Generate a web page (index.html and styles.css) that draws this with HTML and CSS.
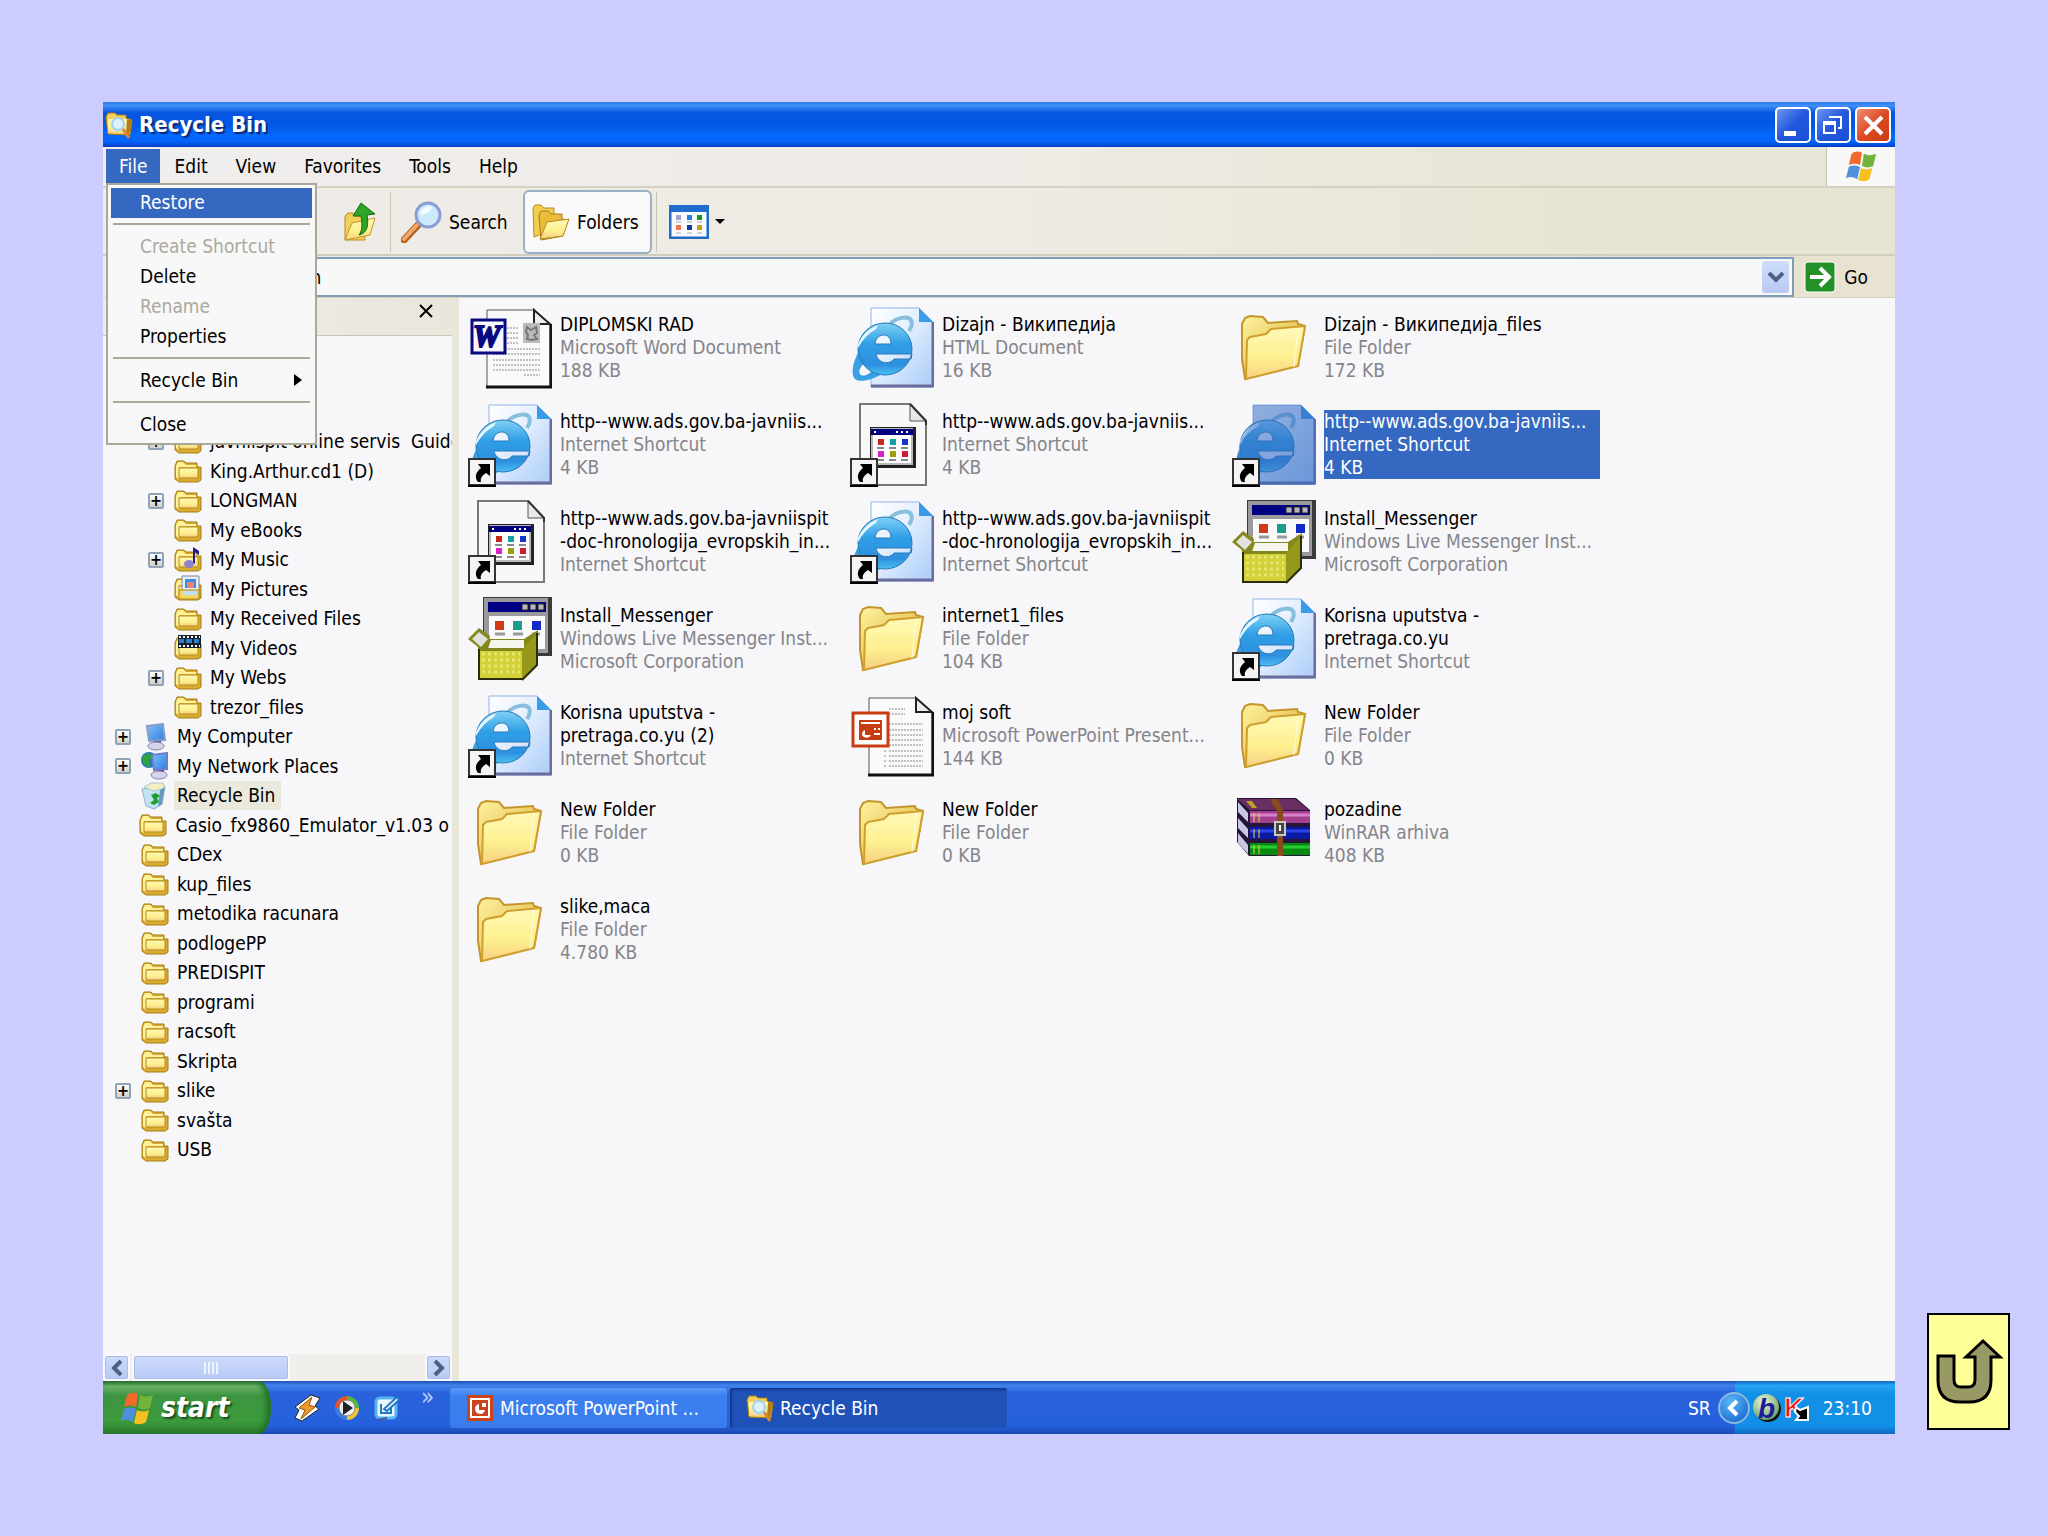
FILE: index.html
```html
<!DOCTYPE html>
<html lang="en">

<head>
    <meta charset="UTF-8">
    <meta name="viewport" content="width=device-width, initial-scale=1.0">
    <title>Recycle Bin</title>
    <link rel="stylesheet" href="styles.css">
</head>

<body>
    <!-- icon library -->
    <svg class="defs" width="0" height="0" aria-hidden="true">
        <defs>
            <linearGradient id="gFolder" x1="0" y1="0" x2="0" y2="1">
                <stop offset="0" stop-color="#fff9b8" />
                <stop offset=".6" stop-color="#fdf08e" />
                <stop offset="1" stop-color="#f7cf83" />
            </linearGradient>
            <linearGradient id="gFolderBack" x1="0" y1="0" x2="1" y2="1">
                <stop offset="0" stop-color="#fdf3a0" />
                <stop offset="1" stop-color="#dca72c" />
            </linearGradient>
            <linearGradient id="gPage" x1="0" y1="0" x2="1" y2="1">
                <stop offset="0" stop-color="#ffffff" />
                <stop offset=".4" stop-color="#e6f0ff" />
                <stop offset="1" stop-color="#a9ccf8" />
            </linearGradient>
            <linearGradient id="gIe" x1="0" y1="0" x2="0" y2="1">
                <stop offset="0" stop-color="#7fd0f4" />
                <stop offset=".4" stop-color="#2f9fe6" />
                <stop offset=".8" stop-color="#2d8fe0" />
                <stop offset="1" stop-color="#4cc0f4" />
            </linearGradient>
            <linearGradient id="gBlue" x1="0" y1="0" x2="1" y2="1">
                <stop offset="0" stop-color="#7fc4fb" />
                <stop offset="1" stop-color="#2f7be0" />
            </linearGradient>
            <radialGradient id="gBall" cx=".4" cy=".3" r=".8">
                <stop offset="0" stop-color="#e8f8d8" />
                <stop offset="1" stop-color="#5f9a58" />
            </radialGradient>
            <radialGradient id="gChev" cx=".4" cy=".3" r=".8">
                <stop offset="0" stop-color="#5cb8f8" />
                <stop offset="1" stop-color="#1464cc" />
            </radialGradient>

            <symbol id="folder" viewBox="0 0 84 84">
                <path d="M10 18L13 12L18 10L31 11L36 17L65 15L66 18L73 20L66 60L13 73L10 53Z" fill="url(#gFolderBack)" stroke="#c4952a" stroke-width="2" />
                <path d="M14 73L15 34L18 31L34 28L39 23L73 20L66 60Z" fill="url(#gFolder)" stroke="#cf9f30" stroke-width="2" />
                <path d="M66 22L62 61" stroke="#fffbe0" stroke-width="1" />
            </symbol>

            <symbol id="iepage" viewBox="0 0 84 84">
                <path d="M21 2H69L83 16V81H21Z" fill="url(#gPage)" stroke="#8fb4ea" stroke-width="1" />
                <path d="M69 2V16H83Z" fill="#3a9be8" />
                <path d="M83 16V80H21" fill="none" stroke="#6a6c9c" stroke-width="3" />
                <path d="M40 18C47 11 58 10 61 14C63 18 61 22 59 25" fill="none" stroke="#88bfdc" stroke-width="4" />
                <path d="M9 45C2 57 1 69 5 73C10 77 22 74 32 68L24 63C18 70 12 71 10 68C8 65 11 60 15 56Z" fill="#3aa0e6" />
                <path d="M8 43A27 26 0 1 0 62 43A27 26 0 1 0 8 43ZM25 38C26 31 30 29 34 29C38 29 41 32 41 38ZM26 48H62L61 53H44C40 59 28 58 26 48Z" fill="url(#gIe)" fill-rule="evenodd" stroke="#2a78b4" stroke-width="1" />
                <path d="M8 38Q14 24 28 19L26 23Q14 30 8 42Z" fill="#e6f8ff" />
            </symbol>

            <symbol id="dots" viewBox="0 0 46 41">
                <path d="M0 0H46V41H0Z" fill="#222" />
                <path d="M1 1H43V38H1Z" fill="#b9b9b9" />
                <path d="M3 8H41V36H3Z" fill="#fff" />
                <path d="M1 2H43V8H1Z" fill="#000080" />
                <path d="M26 4h2v2h-2zM31 4h2v2h-2zM36 4h2v2h-2zM4 4h2v2h-2z" fill="#fff" />
                <path d="M8 12h6v6h-6z" fill="#c8281a" />
                <path d="M20 12h6v6h-6z" fill="#12a0a8" />
                <path d="M32 12h6v6h-6z" fill="#1434d0" />
                <path d="M8 24h6v6h-6z" fill="#d822c8" />
                <path d="M20 24h6v6h-6z" fill="#98a010" />
                <path d="M32 24h6v6h-6z" fill="#d01c30" />
                <path d="M7 21h7M19 21h7M31 21h7M7 33h7M19 33h7M31 33h7" stroke="#888" stroke-width="2" />
            </symbol>

            <symbol id="apppage" viewBox="0 0 84 84">
                <path d="M10 1H60L76 18V82H10Z" fill="#f8f8f8" stroke="#777" stroke-width="2" />
                <path d="M60 1V18H76Z" fill="#e8e8e8" stroke="#555" stroke-width="1" />
                <path d="M60 1L76 18V22" fill="none" stroke="#333" stroke-width="2" />
                <use href="#dots" x="20" y="24" width="46" height="41" />
            </symbol>

            <symbol id="shortcut" viewBox="0 0 84 84">
                <path d="M1 56H27V82H1Z" fill="#f4f4f4" stroke="#333" stroke-width="2" />
                <path d="M0 83H28" stroke="#000" stroke-width="2" />
                <path d="M10 61H22V73L18 70C14 73 12 75 13 79H10C6 74 8 69 13 65Z" fill="#000" />
            </symbol>

            <symbol id="word" viewBox="0 0 84 84">
                <path d="M19 4H66L82 19V81H19Z" fill="#fafafa" stroke="#555" stroke-width="1" />
                <path d="M66 4V18H82Z" fill="#ededed" stroke="#222" stroke-width="2" />
                <path d="M83 18V81H18" fill="none" stroke="#111" stroke-width="3" />
                <path d="M36 22h14M36 27h14M36 32h14M36 37h14M25 43h47M25 48h47M25 54h47M25 59h47M25 64h47M56 69h16" stroke="#888" stroke-width="1" stroke-dasharray="2 1" />
                <path d="M55 17h17v20h-17z" fill="#bbb" />
                <path d="M59 21l4 3 5-3 1 6-3 2 3 4-6 1-4-1 1-4-2-3z" fill="none" stroke="#777" stroke-width="2" />
                <path d="M4 14H37V47H4Z" fill="#f7f7ff" stroke="#0a0a80" stroke-width="3" />
                <text x="5" y="41" class="word-mark">W</text>
            </symbol>

            <symbol id="ppt" viewBox="0 0 84 84">
                <path d="M19 4H66L82 19V81H19Z" fill="#fafafa" stroke="#555" stroke-width="1" />
                <path d="M66 4V18H82Z" fill="#ededed" stroke="#222" stroke-width="2" />
                <path d="M83 18V81H18" fill="none" stroke="#111" stroke-width="3" />
                <path d="M39 15h16M39 20h16M39 30h34M39 36h34M39 41h34M39 46h34M39 51h34M39 57h34M39 62h34M39 67h34M39 72h34M34 57h2M34 62h2M34 67h2M34 72h2" stroke="#888" stroke-width="1" stroke-dasharray="2 1" />
                <path d="M3 19H38V52H3Z" fill="#fff" stroke="#c83c12" stroke-width="3" />
                <path d="M9 26H32V46H9Z" fill="#c83c12" />
                <path d="M11 29h19" stroke="#fff" stroke-width="2" />
                <path d="M15 36v5h6a5 5 0 0 1-9 0a5 5 0 0 1 3-5zM24 34h2v2h-2zM28 34h2v2h-2zM24 39h6v2h-6z" fill="#fff" />
            </symbol>

            <symbol id="install" viewBox="0 0 84 84">
                <path d="M15 0H84V59H15Z" fill="#3a3a3a" />
                <path d="M16 1H80V56H16Z" fill="#9a9a9a" />
                <path d="M20 5H78V15H20Z" fill="#000084" />
                <path d="M54 7h6v6h-6zM62 7h6v6h-6zM70 7h6v6h-6z" fill="#b8b8b8" stroke="#222" />
                <path d="M21 19H77V52H21Z" fill="#fafafa" />
                <path d="M27 24h9v9h-9z" fill="#d03818" />
                <path d="M45 24h9v9h-9z" fill="#1c9c8c" />
                <path d="M64 24h9v9h-9z" fill="#1428c8" />
                <path d="M27 37h10M45 37h10M64 37h8" stroke="#999" stroke-width="3" />
                <path d="M10 42H56L70 33V67L54 83H10Z" fill="#84881c" />
                <path d="M54 53L69 36V68L54 82Z" fill="#96981c" />
                <path d="M69 36V68L54 83" fill="none" stroke="#2c2c08" stroke-width="2" />
                <path d="M23 43H56V51H20Z" fill="#f5f5ee" />
                <path d="M12 54H54V81H12Z" fill="#d2d238" />
                <path d="M14 57H52M14 63H52M14 69H52M14 75H52" stroke="#e6e66c" stroke-width="3" stroke-dasharray="3 3" />
                <path d="M11 52V82H54" fill="none" stroke="#2c2c08" stroke-width="2" />
                <path d="M0 42L11 31L22 39L20 52L10 50Z" fill="#84881c" />
                <path d="M4 42L11 35L20 42L13 50Z" fill="#e0e0dc" />
            </symbol>

            <symbol id="rar" viewBox="0 0 84 84">
                <path d="M5 7H64L78 19V65H17L5 51Z" fill="#26143a" />
                <path d="M5 8H63L77 19H18Z" fill="#6a2f62" />
                <path d="M18 20H78V32H18Z" fill="#a0408e" />
                <path d="M18 24H78" stroke="#d880cc" stroke-width="3" />
                <path d="M18 36H78V48H18Z" fill="#0a1aa4" />
                <path d="M18 40H78" stroke="#2c44e0" stroke-width="3" />
                <path d="M18 52H78V64H18Z" fill="#078a12" />
                <path d="M18 56H78" stroke="#28cc30" stroke-width="3" />
                <path d="M6 11L16 22V31L6 21ZM6 27L16 38V47L6 37ZM6 42L16 54V63L6 52Z" fill="#c8c8e4" />
                <path d="M22 22v9M27 22v9M22 38v9M27 38v9M22 54v9M27 54v9" stroke="#e8d83c" stroke-width="1" />
                <path d="M14 10h6l5 7h-5z" fill="#b8a424" />
                <path d="M38 8H46L51 20V65H45V20Z" fill="#8a4c1c" />
                <path d="M43 31H53V44H43Z" fill="#444" stroke="#c8c8c8" stroke-width="2" />
                <path d="M48 34v6" stroke="#fff" stroke-width="2" />
            </symbol>

            <symbol id="sfolder" viewBox="0 0 28 28">
                <path d="M1 9L3 4H10L12 6H23V10H27V23L24 25H5L1 22Z" fill="#d8ac30" stroke="#a87c14" />
                <path d="M2 9L4 5H9L12 8H22V10H5V22L2 20Z" fill="#fdf29a" />
                <path d="M5 11H24V21H5Z" fill="url(#gFolder)" stroke="#b88a1c" />
            </symbol>
            <symbol id="smusic" viewBox="0 0 28 28">
                <use href="#sfolder" />
                <path d="M19 17V1L25 5V9L21 6V18Z" fill="#1c1c8c" />
                <ellipse cx="15" cy="18" rx="5" ry="4" fill="#8c84cc" />
            </symbol>
            <symbol id="spictures" viewBox="0 0 28 28">
                <use href="#sfolder" />
                <path d="M8 1H25V20H8Z" fill="#e8ecf4" stroke="#7a88a0" />
                <path d="M11 4H22V13H11Z" fill="#3c8ce0" />
                <path d="M13 7h7v6h-7z" fill="#f08070" />
                <path d="M5 15H25V24H5Z" fill="#f3d660" stroke="#b88a1c" />
                <path d="M9 16h14v4h-14z" fill="#bfe0f8" />
            </symbol>
            <symbol id="svideos" viewBox="0 0 28 28">
                <use href="#sfolder" />
                <path d="M4 1H27V14H4Z" fill="#18202c" />
                <path d="M5 3H26M5 12H26" stroke="#f4f4f4" stroke-width="2" stroke-dasharray="2 2" />
                <path d="M5 5h5v4h-5zM12 5h6v4h-6zM20 5h5v4h-5z" fill="#2f80c8" />
            </symbol>
            <symbol id="scomputer" viewBox="0 0 28 28">
                <path d="M6 3L22 1L24 17L8 18Z" fill="url(#gBlue)" stroke="#8c9cc8" stroke-width="2" />
                <path d="M13 18h7v4h-7z" fill="#4c4c90" />
                <ellipse cx="15" cy="23" rx="8" ry="4" fill="#d4d4ec" stroke="#8484ac" />
            </symbol>
            <symbol id="snetwork" viewBox="0 0 28 28">
                <circle cx="8" cy="8" r="8" fill="#2a74cc" />
                <path d="M2 4Q8 -1 12 4L8 10L10 15Q2 14 1 8Z" fill="#2ea43c" />
                <path d="M11 3L26 1L26 17L13 18Z" fill="url(#gBlue)" stroke="#6c80c8" stroke-width="2" />
                <path d="M16 18h7v4h-7z" fill="#4c4c90" />
                <ellipse cx="18" cy="23" rx="8" ry="4" fill="#d4d4ec" stroke="#8484ac" />
            </symbol>
            <symbol id="sbin" viewBox="0 0 28 28">
                <path d="M1 7L24 4L21 22L13 27L5 24Z" fill="#c4e2f4" stroke="#90b4cc" />
                <path d="M3 5L10 1L22 1L24 6L13 9Z" fill="#f2eec0" stroke="#a8c8d8" />
                <path d="M19 8L24 5L21 22L17 25Z" fill="#6c98c0" />
                <path d="M10 13l5-2 4 3-3 2 2 4-5 3-4-2 4-3z" fill="#1ea02c" />
            </symbol>
            <symbol id="searchfolder" viewBox="0 0 28 28">
                <path d="M1 6L3 2H10L12 4H21V7L27 9L25 24L3 23Z" fill="#f2cf58" stroke="#a87c14" />
                <path d="M3 8H22V22H3Z" fill="url(#gFolder)" />
                <path d="M22 8L27 9L24 24L21 22Z" fill="#b87c14" />
                <path d="M8 7H17L19 11V20H8Z" fill="#cfeafa" />
                <circle cx="13" cy="13" r="6" fill="#dcf2fc" stroke="#a8d0ea" stroke-width="2" />
                <path d="M18 18L24 27" stroke="#d88838" stroke-width="3" />
            </symbol>
            <symbol id="flag" viewBox="0 0 34 34">
                <path d="M7 4Q12 0 18 3L16 16Q10 13 4 16Z" fill="#f06a2c" />
                <path d="M20 4Q26 7 33 4L30 17Q24 20 18 17Z" fill="#72b43a" />
                <path d="M4 18Q9 15 16 18L13 31Q7 27 1 30Z" fill="#4f8fdc" />
                <path d="M17 19Q23 22 29 19L26 31Q20 35 14 32Z" fill="#f6c120" />
            </symbol>
        </defs>
    </svg>

    <div class="slide">
        <div class="screen">
            <div class="window">
                <header class="titlebar">
                    <svg class="icon-small"><use href="#searchfolder" /></svg>
                    <h1>Recycle Bin</h1>
                    <div class="controls">
                        <button class="ctl" aria-label="Minimize"><svg viewBox="0 0 32 32"><path d="M7 22h12v5H7z" fill="#fff" /></svg></button>
                        <button class="ctl" aria-label="Restore"><svg viewBox="0 0 32 32"><path d="M12 8H24V19H21" fill="none" stroke="#fff" stroke-width="2" /><path d="M7 13H18V24H7Z" fill="none" stroke="#fff" stroke-width="2" /><path d="M6 14H19" stroke="#fff" stroke-width="4" /></svg></button>
                        <button class="ctl close" aria-label="Close"><svg viewBox="0 0 32 32"><path d="M8 8L25 25M25 8L8 25" stroke="#fff" stroke-width="4" /></svg></button>
                    </div>
                </header>

                <nav class="menubar">
                    <div class="menu-wrap">
                        <button class="menu active">File</button>
                        <div class="dropdown">
                            <button class="active">Restore</button>
                            <hr>
                            <button disabled>Create Shortcut</button>
                            <button>Delete</button>
                            <button disabled>Rename</button>
                            <button>Properties</button>
                            <hr>
                            <button>Recycle Bin <span class="arrow-right"></span></button>
                            <hr>
                            <button>Close</button>
                        </div>
                    </div>
                    <button class="menu">Edit</button>
                    <button class="menu">View</button>
                    <button class="menu">Favorites</button>
                    <button class="menu">Tools</button>
                    <button class="menu">Help</button>
                    <div class="brand"><svg><use href="#flag" /></svg></div>
                </nav>

                <div class="toolbar">
                    <button class="tool up" aria-label="Up">
                        <svg width="34" height="40" viewBox="0 0 34 40">
                            <path d="M2 14L5 11H10L12 14H22V38H2Z" fill="#f2d05c" stroke="#b88a1c" />
                            <path d="M2 38L9 21L32 16L27 33Z" fill="url(#gFolder)" stroke="#c4952a" />
                            <path d="M18 1L32 12L24 13C26 24 24 31 16 33C20 28 19 20 18 14L10 14Z" fill="#2ea428" stroke="#156c14" />
                        </svg>
                    </button>
                    <span class="divider"></span>
                    <button class="tool search">
                        <svg width="42" height="42" viewBox="0 0 42 42">
                            <path d="M3 39L17 24" stroke="#b06428" stroke-width="7" stroke-linecap="round" />
                            <path d="M3 38L16 24" stroke="#f2a868" stroke-width="4" stroke-linecap="round" />
                            <circle cx="27" cy="14" r="12" fill="#cdeafc" stroke="#8c9cd4" stroke-width="3" />
                            <path d="M19 13Q21 5 30 5Q32 9 26 12T19 13" fill="#f2fbff" />
                        </svg>
                        Search
                    </button>
                    <button class="tool folders">
                        <svg width="40" height="38" viewBox="0 0 40 38">
                            <path d="M2 5L4 2H10L13 5H23V26L3 34Z" fill="#f0cc50" stroke="#b88a1c" />
                            <path d="M8 12L10 8H17L20 11H31V16L37 17L32 33L10 37Z" fill="#e9bc3c" stroke="#a87c14" />
                            <path d="M9 36L16 19L38 16L32 33Z" fill="url(#gFolder)" stroke="#b88a1c" />
                        </svg>
                        Folders
                    </button>
                    <span class="divider"></span>
                    <button class="tool views" aria-label="Views">
                        <svg width="40" height="34" viewBox="0 0 40 34">
                            <path d="M1 1H39V33H1Z" fill="#f8fbff" stroke="#1f6cc4" stroke-width="3" />
                            <path d="M0 0H40V7H0Z" fill="#1f6cd0" />
                            <path d="M7 10h5v5h-5z" fill="#a8a0d8" />
                            <path d="M18 10h5v5h-5z" fill="#2a80d8" />
                            <path d="M28 10h5v5h-5z" fill="#189818" />
                            <path d="M7 20h5v5h-5z" fill="#f07850" />
                            <path d="M18 20h5v5h-5z" fill="#143ca0" />
                            <path d="M28 20h5v5h-5z" fill="#c8a010" />
                            <path d="M7 17h5M18 17h5M28 17h5M7 28h5M18 28h5M28 28h5" stroke="#aaa" />
                        </svg>
                        <span class="arrow-down"></span>
                    </button>
                </div>

                <form class="address">
                    <div class="combo">
                        <input type="text" value="Recycle Bin" aria-label="Address">
                        <button type="button" class="combo-btn" aria-label="Show list"><svg width="18" height="12" viewBox="0 0 18 12"><path d="M2 2L9 9L16 2" fill="none" stroke="#4d6185" stroke-width="4" /></svg></button>
                    </div>
                    <button type="button" class="go">
                        <svg width="32" height="32" viewBox="0 0 32 32"><rect x="1" y="1" width="30" height="30" rx="3" fill="#239128" stroke="#fff" /><path d="M6 16H25M16 7L25 16L16 25" fill="none" stroke="#fff" stroke-width="4" /></svg>
                        Go
                    </button>
                </form>

                <main class="content">
                    <aside class="sidebar">
                        <div class="side-head">
                            <button aria-label="Close folders"><svg width="16" height="14" viewBox="0 0 16 14"><path d="M2 1L14 13M14 1L2 13" stroke="#000" stroke-width="2" /></svg></button>
                        </div>
                        <ul class="tree">
                            <li class="sub"><button class="plus">+</button><svg><use href="#sfolder" /></svg><span>javniispit online servis  Guide</span></li>
                            <li class="sub"><i></i><svg><use href="#sfolder" /></svg><span>King.Arthur.cd1 (D)</span></li>
                            <li class="sub"><button class="plus">+</button><svg><use href="#sfolder" /></svg><span>LONGMAN</span></li>
                            <li class="sub"><i></i><svg><use href="#sfolder" /></svg><span>My eBooks</span></li>
                            <li class="sub"><button class="plus">+</button><svg><use href="#smusic" /></svg><span>My Music</span></li>
                            <li class="sub"><i></i><svg><use href="#spictures" /></svg><span>My Pictures</span></li>
                            <li class="sub"><i></i><svg><use href="#sfolder" /></svg><span>My Received Files</span></li>
                            <li class="sub"><i></i><svg><use href="#svideos" /></svg><span>My Videos</span></li>
                            <li class="sub"><button class="plus">+</button><svg><use href="#sfolder" /></svg><span>My Webs</span></li>
                            <li class="sub"><i></i><svg><use href="#sfolder" /></svg><span>trezor_files</span></li>
                            <li><button class="plus">+</button><svg><use href="#scomputer" /></svg><span>My Computer</span></li>
                            <li><button class="plus">+</button><svg><use href="#snetwork" /></svg><span>My Network Places</span></li>
                            <li class="current"><i></i><svg><use href="#sbin" /></svg><span>Recycle Bin</span></li>
                            <li><i></i><svg><use href="#sfolder" /></svg><span>Casio_fx9860_Emulator_v1.03 o</span></li>
                            <li><i></i><svg><use href="#sfolder" /></svg><span>CDex</span></li>
                            <li><i></i><svg><use href="#sfolder" /></svg><span>kup_files</span></li>
                            <li><i></i><svg><use href="#sfolder" /></svg><span>metodika racunara</span></li>
                            <li><i></i><svg><use href="#sfolder" /></svg><span>podlogePP</span></li>
                            <li><i></i><svg><use href="#sfolder" /></svg><span>PREDISPIT</span></li>
                            <li><i></i><svg><use href="#sfolder" /></svg><span>programi</span></li>
                            <li><i></i><svg><use href="#sfolder" /></svg><span>racsoft</span></li>
                            <li><i></i><svg><use href="#sfolder" /></svg><span>Skripta</span></li>
                            <li><button class="plus">+</button><svg><use href="#sfolder" /></svg><span>slike</span></li>
                            <li><i></i><svg><use href="#sfolder" /></svg><span>svašta</span></li>
                            <li><i></i><svg><use href="#sfolder" /></svg><span>USB</span></li>
                        </ul>
                        <div class="scrollbar">
                            <button aria-label="Scroll left"><svg width="12" height="18" viewBox="0 0 12 18"><path d="M10 2L3 9L10 16" fill="none" stroke="#4d6185" stroke-width="4" /></svg></button>
                            <div class="thumb"><svg width="14" height="12" viewBox="0 0 14 12"><path d="M1 0V12M5 0V12M9 0V12M13 0V12" stroke="#eef4fe" stroke-width="2" /></svg></div>
                            <button aria-label="Scroll right"><svg width="12" height="18" viewBox="0 0 12 18"><path d="M2 2L9 9L2 16" fill="none" stroke="#4d6185" stroke-width="4" /></svg></button>
                        </div>
                    </aside>

                    <ul class="files">
                        <li>
                            <svg><use href="#word" /></svg>
                            <p><b>DIPLOMSKI RAD</b>Microsoft Word Document<br>188 KB</p>
                        </li>
                        <li>
                            <svg><use href="#iepage" /></svg>
                            <p><b>Dizajn - Википедија</b>HTML Document<br>16 KB</p>
                        </li>
                        <li>
                            <svg><use href="#folder" /></svg>
                            <p><b>Dizajn - Википедија_files</b>File Folder<br>172 KB</p>
                        </li>
                        <li>
                            <svg><use href="#iepage" /><use href="#shortcut" /></svg>
                            <p><b>http--www.ads.gov.ba-javniis...</b>Internet Shortcut<br>4 KB</p>
                        </li>
                        <li>
                            <svg><use href="#apppage" /><use href="#shortcut" /></svg>
                            <p><b>http--www.ads.gov.ba-javniis...</b>Internet Shortcut<br>4 KB</p>
                        </li>
                        <li class="selected">
                            <svg><use href="#iepage" /><path class="tint" d="M21 2H69L83 16V82H21V70L5 75L3 62L9 36L21 20Z" /><use href="#shortcut" /></svg>
                            <p><b>http--www.ads.gov.ba-javniis...</b>Internet Shortcut<br>4 KB</p>
                        </li>
                        <li>
                            <svg><use href="#apppage" /><use href="#shortcut" /></svg>
                            <p><b>http--www.ads.gov.ba-javniispit<br>-doc-hronologija_evropskih_in...</b>Internet Shortcut</p>
                        </li>
                        <li>
                            <svg><use href="#iepage" /><use href="#shortcut" /></svg>
                            <p><b>http--www.ads.gov.ba-javniispit<br>-doc-hronologija_evropskih_in...</b>Internet Shortcut</p>
                        </li>
                        <li>
                            <svg><use href="#install" /></svg>
                            <p><b>Install_Messenger</b>Windows Live Messenger Inst...<br>Microsoft Corporation</p>
                        </li>
                        <li>
                            <svg><use href="#install" /></svg>
                            <p><b>Install_Messenger</b>Windows Live Messenger Inst...<br>Microsoft Corporation</p>
                        </li>
                        <li>
                            <svg><use href="#folder" /></svg>
                            <p><b>internet1_files</b>File Folder<br>104 KB</p>
                        </li>
                        <li>
                            <svg><use href="#iepage" /><use href="#shortcut" /></svg>
                            <p><b>Korisna uputstva -<br>pretraga.co.yu</b>Internet Shortcut</p>
                        </li>
                        <li>
                            <svg><use href="#iepage" /><use href="#shortcut" /></svg>
                            <p><b>Korisna uputstva -<br>pretraga.co.yu (2)</b>Internet Shortcut</p>
                        </li>
                        <li>
                            <svg><use href="#ppt" /></svg>
                            <p><b>moj soft</b>Microsoft PowerPoint Present...<br>144 KB</p>
                        </li>
                        <li>
                            <svg><use href="#folder" /></svg>
                            <p><b>New Folder</b>File Folder<br>0 KB</p>
                        </li>
                        <li>
                            <svg><use href="#folder" /></svg>
                            <p><b>New Folder</b>File Folder<br>0 KB</p>
                        </li>
                        <li>
                            <svg><use href="#folder" /></svg>
                            <p><b>New Folder</b>File Folder<br>0 KB</p>
                        </li>
                        <li>
                            <svg><use href="#rar" /></svg>
                            <p><b>pozadine</b>WinRAR arhiva<br>408 KB</p>
                        </li>
                        <li>
                            <svg><use href="#folder" /></svg>
                            <p><b>slike,maca</b>File Folder<br>4.780 KB</p>
                        </li>
                    </ul>
                </main>
            </div>

            <footer class="taskbar">
                <button class="start"><svg><use href="#flag" /></svg>start</button>
                <div class="quick">
                    <button aria-label="Winamp"><svg viewBox="0 0 28 28"><path d="M18 1L27 4L22 12L26 15L9 27L2 24L6 16L2 13Z" fill="#fff" stroke="#222" /><path d="M19 3L16 11L22 13L8 25L12 16L6 14Z" fill="#f0982c" stroke="#8c5410" /></svg></button>
                    <button aria-label="Media Player"><svg viewBox="0 0 28 28"><path d="M14 14V2A12 12 0 0 0 2 14Z" fill="#e8502c" /><path d="M14 14V2A12 12 0 0 1 26 14Z" fill="#58b83c" /><path d="M14 14H2A12 12 0 0 0 14 26Z" fill="#3c7ce0" /><path d="M14 14H26A12 12 0 0 1 14 26Z" fill="#f4c42c" /><circle cx="14" cy="14" r="8" fill="#f0f0f0" stroke="#888" /><path d="M10 7L20 14L10 21Z" fill="#222" /></svg></button>
                    <button aria-label="Show Desktop"><svg viewBox="0 0 28 28"><rect x="3" y="4" width="20" height="20" rx="4" fill="#e8f6ff" stroke="#58b4f0" stroke-width="3" /><path d="M8 10V19H18V14M11 15L24 3L26 6L14 17Z" fill="#f8fcff" stroke="#2478c8" stroke-width="2" /><path d="M4 26L14 24" stroke="#3c5c90" stroke-width="2" /></svg></button>
                    <span class="more">»</span>
                </div>
                <button class="task">
                    <svg viewBox="0 0 28 28"><rect x="1" y="1" width="26" height="26" fill="#c8441c" /><path d="M5 5H23V23H5Z" fill="none" stroke="#fff" stroke-width="2" /><path d="M13 10a5 5 0 1 0 6 6h-6zM16 9h4v4h-4z" fill="#fff" /></svg>
                    Microsoft PowerPoint ...
                </button>
                <button class="task pressed">
                    <svg><use href="#searchfolder" /></svg>
                    Recycle Bin
                </button>
                <span class="lang">SR</span>
                <div class="tray">
                    <button class="chev" aria-label="Show hidden icons"><svg viewBox="0 0 34 34"><circle cx="17" cy="17" r="15" fill="url(#gChev)" stroke="#8cb8e4" stroke-width="2" /><path d="M20 10L13 17L20 24" fill="none" stroke="#fff" stroke-width="4" /></svg></button>
                    <svg class="tray-icon" viewBox="0 0 28 28"><circle cx="15" cy="15" r="13" fill="#111" /><circle cx="13" cy="13" r="13" fill="url(#gBall)" /><text x="5" y="24" class="b-mark">b</text></svg>
                    <svg class="tray-icon" viewBox="0 0 28 28"><text x="1" y="23" class="k-mark">K</text><path d="M13 13L17 16L25 13V26H13L16 22L12 18Z" fill="#000" stroke="#fff" stroke-width="2" /></svg>
                    <time>23:10</time>
                </div>
            </footer>
        </div>

        <a class="back" href="#" aria-label="Back">
            <svg viewBox="0 0 79 113">
                <path d="M9 41H25V65Q25 72 32 72H39Q46 72 46 65V42H37L54 26L71 42H62V65Q62 87 40 87H31Q9 87 9 65Z" fill="#999966" stroke="#000" stroke-width="3" />
            </svg>
        </a>
    </div>
</body>

</html>
```

FILE: styles.css
```css
* {
    box-sizing: border-box;
}

body {
    margin: 0;
    background: #ccccff;
    font-family: "DejaVu Sans Condensed", "Noto Sans", sans-serif;
    font-size: 19px;
    color: #000;
}

button,
input {
    font: inherit;
    color: inherit;
    border: 0;
    padding: 0;
    background: none;
}

button {
    display: flex;
    align-items: center;
    white-space: nowrap;
}

svg {
    display: block;
    flex: none;
}

ul {
    list-style: none;
    margin: 0;
    padding: 0;
}

.defs {
    position: absolute;
}

.slide {
    display: flex;
    gap: 32px;
    min-height: 100vh;
    padding: 102px 38px 102px 103px;
}

.screen {
    flex: 1;
    min-width: 0;
    display: flex;
    flex-direction: column;
}

.window {
    flex: 1;
    display: flex;
    flex-direction: column;
    background: #f7f6f9;
}

/* title bar */
.titlebar {
    display: flex;
    align-items: center;
    height: 45px;
    padding: 0 4px 0 2px;
    background: linear-gradient(#2f7ae8, #3f8ff8 8%, #0655e0 24%, #0458e4 50%, #0468fc 75%, #0464f8 88%, #0240c4);
}

.icon-small {
    width: 28px;
    height: 28px;
    margin-right: 6px;
}

.titlebar h1 {
    flex: 1;
    margin: 0;
    font-size: 22px;
    color: #fff;
    text-shadow: 2px 2px 1px #0a2a80;
}

.controls {
    display: flex;
    gap: 4px;
}

.ctl {
    width: 36px;
    height: 36px;
    border: 2px solid #fff;
    border-radius: 5px;
    background: linear-gradient(135deg, #6c94f0, #2458dc 50%, #1c50d4);
}

.ctl.close {
    background: linear-gradient(135deg, #f09078, #dc4c24 50%, #cc3c10);
}

/* menu bar */
.menubar {
    display: flex;
    height: 41px;
    padding: 2px 0 0 3px;
    border-bottom: 2px solid #d6d1c0;
    background: linear-gradient(90deg, #f0eeee, #efebe6 50%, #e9e5d6 80%);
}

.menu-wrap {
    position: relative;
}

.menu {
    height: 34px;
    padding: 0 14px;
}

.menu-wrap .menu {
    padding: 0 13px;
}

.menu.active,
.dropdown .active {
    background: #3569c1;
    color: #fff;
}

.dropdown {
    position: absolute;
    z-index: 5;
    left: 0;
    top: 34px;
    width: 211px;
    padding: 3px;
    border: 2px solid #aca899;
    background: #f8f8f8;
}

.dropdown button {
    width: 100%;
    height: 30px;
    padding: 0 10px 3px 29px;
    justify-content: space-between;
}

.dropdown button:disabled {
    color: #aca99c;
}

.dropdown hr {
    height: 2px;
    margin: 5px 2px 7px;
    border: 0;
    background: #aca899;
}

.arrow-right {
    border-left: 8px solid #000;
    border-top: 6px solid transparent;
    border-bottom: 6px solid transparent;
}

.brand {
    width: 69px;
    margin: -2px 0 0 auto;
    padding: 3px 0 0 17px;
    border-left: 1px solid #c8c4b4;
    background: #f8f8f8;
}

.brand svg {
    width: 34px;
    height: 32px;
}

/* toolbar */
.toolbar {
    display: flex;
    align-items: center;
    height: 68px;
    padding: 1px 0 0 240px;
    border-bottom: 2px solid #d2cdbc;
    background: linear-gradient(90deg, #efece8, #eeebe4 50%, #e8e4d2 85%);
}

.tool {
    height: 64px;
    gap: 6px;
}

.divider {
    width: 1px;
    height: 60px;
    background: #c9c5b5;
}

.up {
    margin-right: 13px;
}

.search {
    width: 112px;
    margin: 0 10px;
}

.folders {
    width: 129px;
    margin-right: 4px;
    padding-left: 6px;
    border: 2px solid #9ab0c4;
    border-radius: 6px;
    background: #f9f9fa;
}

.views {
    margin-left: 12px;
}

.arrow-down {
    border-top: 5px solid #000;
    border-left: 5px solid transparent;
    border-right: 5px solid transparent;
}

/* address bar */
.address {
    display: flex;
    align-items: center;
    height: 42px;
    margin: 0;
    padding: 0 27px 0 84px;
    border-bottom: 1px solid #d6d1c0;
    background: linear-gradient(90deg, #efece8, #e8e2d0);
}

.combo {
    flex: 1;
    display: flex;
    align-items: center;
    height: 40px;
    padding-right: 3px;
    border: 2px solid #7f9db9;
    background: #f8f8f9;
}

.combo input {
    flex: 1;
    height: 34px;
    padding-left: 34px;
}

.combo-btn {
    width: 27px;
    height: 32px;
    justify-content: center;
    border-radius: 3px;
    background: linear-gradient(#cfdcfb, #b8c9f4);
}

.go {
    margin-left: 10px;
    gap: 8px;
}

/* content */
.content {
    flex: 1;
    display: flex;
}

.sidebar {
    display: flex;
    flex-direction: column;
    width: 356px;
    border-right: 7px solid #e9e7da;
}

.side-head {
    display: flex;
    justify-content: flex-end;
    align-items: flex-start;
    height: 38px;
    padding: 6px 18px 0 0;
    border-bottom: 1px solid #cbc7b8;
    background: linear-gradient(90deg, #f0ebe6, #ebe6dc);
}

.tree {
    flex: 1;
    padding-top: 91px;
    overflow: hidden;
}

.tree li {
    display: flex;
    align-items: center;
    height: 29px;
    padding-left: 12px;
    white-space: pre;
}

.tree li:nth-child(even) {
    height: 30px;
}

.tree .sub {
    padding-left: 45px;
}

.tree svg {
    width: 28px;
    height: 28px;
    margin: 0 5px 0 10px;
}

.tree span {
    line-height: 29px;
    padding: 0 3px;
}

.tree i {
    width: 16px;
}

.tree .current span {
    padding-right: 6px;
    background: #ebe9dc;
}

.plus {
    width: 16px;
    height: 16px;
    justify-content: center;
    border: 2px solid #8fa3b8;
    border-radius: 2px;
    background: linear-gradient(#fff, #d4d0c4);
    font-size: 16px;
    font-weight: bold;
    line-height: 12px;
}

.scrollbar {
    display: flex;
    gap: 2px;
    height: 27px;
    background: #f0efec;
}

.scrollbar button,
.thumb {
    display: flex;
    align-items: center;
    justify-content: center;
    width: 27px;
    border: 2px solid #f8faff;
    border-radius: 4px;
    background: linear-gradient(#cddafb, #b8caf4);
    box-shadow: inset 0 0 0 1px #a8bce8;
}

.scrollbar .thumb {
    width: 158px;
    margin-right: auto;
}

.files {
    flex: 1;
    display: grid;
    grid-template-columns: repeat(auto-fill, 382px);
    grid-auto-rows: 97px;
    align-content: start;
    padding: 1px 0 0 9px;
}

.files li {
    display: flex;
    align-items: center;
    gap: 8px;
}

.files svg {
    width: 84px;
    height: 84px;
}

.files p {
    margin: 0;
    line-height: 23px;
    color: #85858a;
    white-space: nowrap;
}

.files b {
    display: block;
    font-weight: normal;
    color: #000;
}

.files .selected p {
    width: 276px;
    background: #3569c1;
}

.files .selected p,
.files .selected b {
    color: #fff;
}

.tint {
    fill: #3569c1;
    opacity: .55;
}

.word-mark {
    font: italic bold 31px "Liberation Serif", serif;
    fill: #0a0a80;
    stroke: #0a0a80;
    stroke-width: 2px;
}

/* taskbar */
.taskbar {
    display: flex;
    align-items: center;
    height: 53px;
    color: #fff;
    background: linear-gradient(#1f4fb4, #3f84ec 8%, #2a62dc 22%, #2560dc 85%, #1c48b0);
}

.start {
    width: 168px;
    height: 53px;
    padding-left: 17px;
    gap: 7px;
    border-radius: 0 12px 12px 0 / 0 26px 26px 0;
    background: linear-gradient(#2c7434, #6cb468 10%, #3c9440 28%, #3c9c3c 75%, #2c7c2c);
    box-shadow: inset -4px 0 6px #1f6c24;
    font-size: 28px;
    font-style: italic;
    font-weight: bold;
    text-shadow: 2px 2px 2px #1c4c1c;
}

.start svg {
    width: 34px;
    height: 34px;
}

.quick {
    display: flex;
    align-items: center;
    width: 179px;
    padding-left: 22px;
    gap: 12px;
}

.quick svg,
.task svg {
    width: 28px;
    height: 28px;
}

.more {
    margin: 0 0 22px 8px;
    font-size: 24px;
    line-height: 24px;
    color: #b4d0fc;
}

.task {
    width: 277px;
    height: 40px;
    margin-right: 3px;
    padding-left: 16px;
    gap: 6px;
    border-radius: 3px;
    background: linear-gradient(#5c9cf8, #3c80f0 20%, #3a7cec);
}

.task.pressed {
    background: #1e52b8;
    box-shadow: inset 2px 2px 2px #12388c;
}

.lang {
    margin-left: auto;
    padding-right: 24px;
}

.tray {
    display: flex;
    align-items: center;
    height: 53px;
    padding-right: 23px;
    background: linear-gradient(#1464b8, #24a4f4 8%, #1290e8 25%, #1290e8 85%, #1068c0);
}

.chev {
    margin-left: -18px;
}

.chev svg {
    width: 34px;
    height: 34px;
}

.tray-icon {
    width: 28px;
    height: 28px;
    margin-left: 2px;
}

.b-mark {
    font: italic bold 28px "Liberation Sans", sans-serif;
    fill: #1c1c9c;
}

.k-mark {
    font: bold 28px "Liberation Sans", sans-serif;
    fill: #e81414;
    stroke: #fff;
    stroke-width: 1px;
}

.tray time {
    margin-left: 12px;
}

/* slide navigation */
.back {
    align-self: flex-end;
    width: 83px;
    height: 117px;
    margin-bottom: 4px;
    border: 2px solid #000;
    background: #ffff99;
}
```
